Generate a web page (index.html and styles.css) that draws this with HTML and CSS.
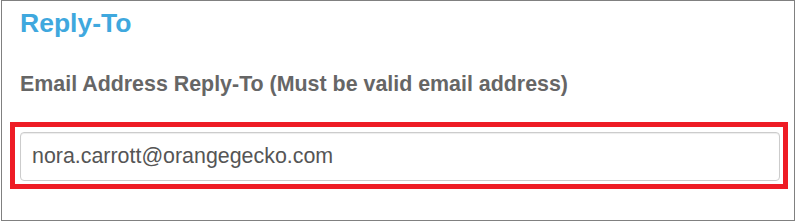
FILE: index.html
```html
<!DOCTYPE html>
<html>
<head>
  <title>Reply-To</title>
  <link rel="stylesheet" href="styles.css">
</head>
<body>
  <div class="panel">
    <h2 class="panel-title">Reply-To</h2>
    <label class="field-label" for="replyTo">Email Address Reply-To (Must be valid email address)</label>
    <div class="highlight">
      <input class="field-input" id="replyTo" type="text" value="nora.carrott@orangegecko.com">
    </div>
  </div>
</body>
</html>
```

FILE: styles.css
```css
body {
  margin: 0;
  background: #fff;
  font-family: "Liberation Sans", Arial, sans-serif;
}

.panel {
  box-sizing: border-box;
  width: 794px;
  height: 221px;
  margin-left: 1px;
  border: 1px solid #808080;
  padding: 7px 6px 0 8px;
}

.panel-title {
  margin: 0 0 0 10px;
  font-size: 26.5px;
  line-height: 30px;
  font-weight: bold;
  color: #3fa8de;
}

.field-label {
  display: block;
  margin: 34px 0 0 10px;
  font-size: 21.4px;
  line-height: 24px;
  font-weight: bold;
  color: #666;
}

.highlight {
  margin-top: 26px;
  border: 5px solid #ee1c25;
  padding: 5px 3px 3px 5px;
}

.field-input {
  box-sizing: border-box;
  display: block;
  width: 100%;
  height: 49px;
  margin: 0;
  padding: 0 10px 0 11px;
  border: 1px solid #ccc;
  border-radius: 4px;
  box-shadow: inset 0 1px 1px rgba(0, 0, 0, 0.075);
  font-family: "Liberation Sans", Arial, sans-serif;
  font-size: 21.4px;
  color: #555;
  background: #fff;
  outline: none;
}
```
